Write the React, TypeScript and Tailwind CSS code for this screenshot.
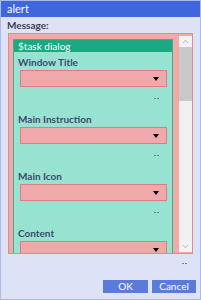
import React from 'react';
import { ChevronUp, ChevronDown } from 'lucide-react';

const fields = ['Window Title', 'Main Instruction', 'Main Icon', 'Content'];

// the small "--" marker under each value
const Dashes: React.FC = () => (
    <div className="flex gap-[1px]">
        <div className="w-[2px] h-[1px] bg-[#808080]" />
        <div className="w-[2px] h-[1px] bg-[#808080]" />
    </div>
);

const Field: React.FC<{ label: string }> = ({ label }) => (
    <div>
        <div className="h-[15px] pl-[4px] text-[10px] leading-[15px] font-bold text-[#3b4b6e]">{label}</div>
        <div className="ml-[6px] w-[147px] h-[17px] bg-[#f0a9ab] border border-[#e27b80] flex items-center justify-end pr-[7px]">
            <div className="w-0 h-0 border-l-[3px] border-r-[3px] border-t-[4px] border-l-transparent border-r-transparent border-t-black mt-[1px]" />
        </div>
        <div className="h-[25px] flex justify-end pr-[13px] pt-[11px]">
            <Dashes />
        </div>
    </div>
);

const App: React.FC = () => {
    return (
        <div
            className="w-[201px] h-[300px] border border-[#aab9f0] bg-[#dde2f6] flex flex-col"
            style={{ fontFamily: 'Lato, "Open Sans", sans-serif' }}
        >
            <div className="h-[16px] bg-[#3f66dd] text-white text-[11px] leading-[15px] pl-[6px]">alert</div>
            <div className="h-[16px] pl-[6px] text-[10px] leading-[16px] font-bold text-[#3a3f55]">Message:</div>
            <div className="ml-[7px] w-[185px] h-[221px] shrink-0 bg-[#f1a9aa] border border-[#e8868a] flex overflow-hidden">
                <div className="pl-[4px] pt-[5px] w-[170px] overflow-hidden">
                    <div className="w-[160px] bg-[#98e2d1] border border-[#3fae8e] border-b-0">
                        <div className="h-[12px] bg-[#1ba883] text-white text-[10px] leading-[12px] pl-[4px]">$task dialog</div>
                        <div className="pt-[3px]">
                            {fields.map(f => (
                                <Field key={f} label={f} />
                            ))}
                        </div>
                    </div>
                </div>
                <div className="w-[13px] mt-[2px] flex flex-col">
                    <div className="h-[11px] bg-[#f3f3f3] flex items-center justify-center">
                        <ChevronUp size={9} color="#9a9a9a" strokeWidth={2} />
                    </div>
                    <div className="h-[54px] bg-[#c9c9c9]" />
                    <div className="flex-1 bg-[#f0f0f0]" />
                    <div className="h-[11px] bg-[#f3f3f3] flex items-center justify-center mb-[1px]">
                        <ChevronDown size={9} color="#9a9a9a" strokeWidth={2} />
                    </div>
                </div>
            </div>
            <div className="h-[26px] shrink-0 flex justify-end pr-[13px] pt-[9px]">
                <Dashes />
            </div>
            <div className="flex justify-end gap-[4px] pr-[4px]">
                <button className="w-[45px] h-[13px] bg-[#5b7bd8] text-white text-[10px] leading-[13px]">OK</button>
                <button className="w-[44px] h-[13px] bg-[#5b7bd8] text-white text-[10px] leading-[13px]">Cancel</button>
            </div>
        </div>
    );
};

export default App;
